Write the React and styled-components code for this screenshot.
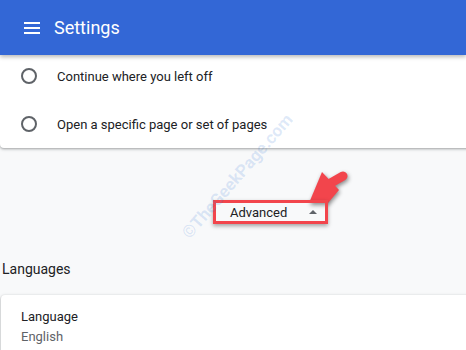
import React from "react";
import styled, { createGlobalStyle } from "styled-components";

const Global = createGlobalStyle`
  html, body { margin: 0; padding: 0; background: #f8f9fa; overflow: hidden; }
  body { font-family: Roboto, "Liberation Sans", Arial, sans-serif; }
`;

const Page = styled.div`
  position: relative;
  width: 466px;
  height: 350px;
  overflow: hidden;
  background: #f8f9fa;
  color: #202124;
`;

const Header = styled.header`
  position: relative;
  z-index: 2;
  height: 55px;
  background: #3367d6;
  display: flex;
  align-items: center;
  padding-left: 24px;
  gap: 14px;
  box-shadow: 0 2px 4px rgba(0, 0, 0, 0.28);
`;

const Menu = styled.div`
  width: 16px;
  display: flex;
  flex-direction: column;
  gap: 3px;
  span {
    display: block;
    height: 2px;
    background: #fff;
  }
`;

const Title = styled.h1`
  margin: 0;
  font-size: 18px;
  font-weight: 400;
  color: #fff;
  line-height: 22px;
`;

const Card = styled.section`
  position: relative;
  z-index: 1;
  margin-top: ${(p) => p.$top || 0}px;
  margin-left: ${(p) => p.$left || 0}px;
  width: 490px;
  background: #fff;
  border-radius: 4px;
  box-shadow: 0 1px 2px rgba(60, 64, 67, 0.3), 0 1px 3px 1px rgba(60, 64, 67, 0.15);
`;

const Row = styled.label`
  height: 48px;
  display: flex;
  align-items: center;
  padding-left: 21px;
  gap: 20px;
  font-size: 13px;
`;

const Radio = styled.span`
  width: 16px;
  height: 16px;
  box-sizing: border-box;
  border: 2px solid #5f6368;
  border-radius: 50%;
  flex: none;
`;

const AdvancedWrap = styled.div`
  position: relative;
  margin-top: 52px;
  margin-left: 213px;
  width: 115px;
`;

const AdvancedBox = styled.div`
  position: relative;
  z-index: 1;
  height: 24px;
  box-sizing: border-box;
  border: 3px solid #f2454c;
  box-shadow: 0 2px 4px rgba(0, 0, 0, 0.35);
  display: flex;
  align-items: center;
  padding-left: 14px;
  font-size: 13px;
  color: #202124;
`;

const Caret = styled.span`
  margin-left: 22px;
  width: 0;
  height: 0;
  border-left: 4px solid transparent;
  border-right: 4px solid transparent;
  border-bottom: 4px solid #5f6368;
`;

const Pointer = styled.svg`
  position: absolute;
  z-index: 0;
  left: 92px;
  top: -32px;
  overflow: visible;
  filter: drop-shadow(1px 2px 2px rgba(0, 0, 0, 0.45));
`;

const SectionTitle = styled.h2`
  margin: 37px 0 18px 2px;
  font-size: 14px;
  font-weight: 400;
  line-height: 16px;
  color: #202124;
`;

const LangBody = styled.div`
  padding: 12px 0 0 20px;
  height: 60px;
  font-size: 13px;
  line-height: 20px;
`;

const Sub = styled.div`
  color: #5f6368;
`;

const Watermark = styled.div`
  position: absolute;
  left: 237px;
  top: 176px;
  transform: translate(-50%, -50%) rotate(-49deg);
  font-size: 17px;
  font-weight: 700;
  white-space: nowrap;
  color: rgba(51, 120, 214, 0.16);
  pointer-events: none;
  z-index: 3;
`;

export default function App() {
  return (
    <Page>
      <Global />
      <Header>
        <Menu>
          <span />
          <span />
          <span />
        </Menu>
        <Title>Settings</Title>
      </Header>
      <Card $top={-3}>
        <Row>
          <Radio />
          Continue where you left off
        </Row>
        <Row>
          <Radio />
          Open a specific page or set of pages
        </Row>
      </Card>
      <AdvancedWrap>
        <Pointer width="42" height="36" viewBox="0 0 42 36">
          <line x1="24" y1="16" x2="38" y2="8" stroke="#f2454c" strokeWidth="9" strokeLinecap="round" />
          <polygon points="17,4 34,22 23,35 4,35" fill="#f2454c" />
        </Pointer>
        <AdvancedBox>
          Advanced
          <Caret />
        </AdvancedBox>
      </AdvancedWrap>
      <SectionTitle>Languages</SectionTitle>
      <Card $left={1}>
        <LangBody>
          <div>Language</div>
          <Sub>English</Sub>
        </LangBody>
      </Card>
      <Watermark>©TheGeekPage.com</Watermark>
    </Page>
  );
}
